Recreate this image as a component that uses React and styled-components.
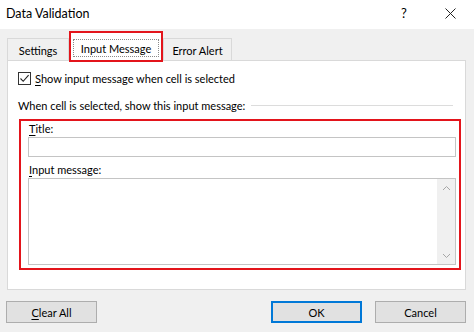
import React from 'react'
import styled, { createGlobalStyle } from 'styled-components'

const Global = createGlobalStyle`
  html, body {
    margin: 0;
    padding: 0;
    background: #f0f0f0;
  }
  body {
    font-family: Lato, "Open Sans", sans-serif;
    color: #000;
  }
`

const Dialog = styled.div`
  width: 474px;
  height: 332px;
  display: flex;
  flex-direction: column;
  background: #f0f0f0;
  overflow: hidden;
`

const TitleBar = styled.div`
  height: 29px;
  background: #fff;
  display: flex;
  align-items: center;
  padding-left: 6px;
  font-size: 12.5px;
`

const TitleText = styled.div`
  flex: 1;
  margin-top: -2px;
`

const Help = styled.div`
  width: 14px;
  font-size: 13px;
  margin-right: 30px;
  margin-top: -3px;
`

const Close = styled.div`
  width: 29px;
  display: flex;
  align-items: center;
  margin-top: -3px;
`

const Body = styled.div`
  flex: 1;
  padding: 0 8px 0 7px;
  display: flex;
  flex-direction: column;
`

const TabStrip = styled.div`
  height: 31px;
  display: flex;
  align-items: flex-end;
  font-size: 11px;
`

const Tab = styled.div`
  width: ${p => p.w}px;
  height: 22px;
  margin-right: 2px;
  border: 1px solid #d9d9d9;
  border-bottom: none;
  background: #f0f0f0;
  display: flex;
  align-items: center;
  justify-content: center;
  padding-top: 1px;
  box-sizing: border-box;
`

const ActiveTab = styled.div`
  position: relative;
  z-index: 2;
  width: 90px;
  height: 27px;
  margin-right: 2px;
  background: #fff;
  outline: 2px solid #e3141b;
  display: flex;
  align-items: center;
  justify-content: center;
  padding-top: 3px;
  box-sizing: border-box;
`

const Focus = styled.span`
  border: 1px dotted #8a8a8a;
  height: 18px;
  width: 86px;
  box-sizing: border-box;
  white-space: nowrap;
  display: flex;
  align-items: center;
  justify-content: center;
`

const Panel = styled.div`
  height: 230px;
  background: #fff;
  border: 1px solid #d9d9d9;
  box-sizing: border-box;
  padding: 11px 10px 0 9px;
  font-size: 11px;
  display: flex;
  flex-direction: column;
`

const CheckRow = styled.label`
  display: flex;
  align-items: center;
  gap: 4px;
  height: 13px;
  margin-left: 1px;
`

const Box = styled.span`
  width: 13px;
  height: 13px;
  border: 1px solid #333;
  box-sizing: border-box;
  display: flex;
  align-items: center;
  justify-content: center;
`

const GroupHead = styled.div`
  display: flex;
  align-items: center;
  gap: 6px;
  margin-top: 12px;
  margin-left: 1px;
  margin-right: 2px;
  height: 16px;
`

const Rule = styled.div`
  flex: 1;
  height: 1px;
  background: #dcdcdc;
`

const Highlight = styled.div`
  margin: 6px -6px 0 2px;
  height: 151px;
  border: 2px solid #e3141b;
  box-sizing: border-box;
  padding: 0 3px 0 7px;
  display: flex;
  flex-direction: column;
`

const FieldLabel = styled.div`
  height: 15px;
  line-height: 15px;
  margin-left: 1px;
  margin-top: ${p => p.top || 0}px;
`

const TextBox = styled.div`
  height: 20px;
  border: 1px solid #c4c4c4;
  box-sizing: border-box;
  margin-top: 1px;
`

const TextArea = styled.div`
  height: 87px;
  border: 1px solid #c4c4c4;
  box-sizing: border-box;
  margin-top: 1px;
  display: flex;
  justify-content: flex-end;
`

const Scroll = styled.div`
  width: 18px;
  background: #f0f0f0;
  display: flex;
  flex-direction: column;
  justify-content: space-between;
  align-items: center;
  padding: 6px 0 5px;
`

const Footer = styled.div`
  height: 42px;
  display: flex;
  align-items: flex-start;
  padding-top: 11px;
  box-sizing: border-box;
  margin-left: -1px;
  gap: 13px;
`

const Button = styled.div`
  width: 91px;
  height: 22px;
  box-sizing: border-box;
  background: #e1e1e1;
  border: ${p => (p.primary ? '2px solid #0078d7' : '1px solid #adadad')};
  display: flex;
  align-items: center;
  justify-content: center;
  font-size: 11px;
  margin-left: ${p => (p.push ? 'auto' : '0')};
`

const U = styled.span`
  text-decoration: underline;
  text-underline-offset: 2px;
`

const Chevron = ({ down }) => (
  <svg width="9" height="6" viewBox="0 0 9 6">
    <path
      d={down ? 'M1 1 L4.5 4.5 L8 1' : 'M1 5 L4.5 1.5 L8 5'}
      fill="none"
      stroke="#a6a6a6"
      strokeWidth="1"
    />
  </svg>
)

export default function App() {
  return (
    <>
      <Global />
      <Dialog>
        <TitleBar>
          <TitleText>Data Validation</TitleText>
          <Help>?</Help>
          <Close>
            <svg width="11" height="11" viewBox="0 0 11 11">
              <path d="M0.5 0.5 L10.5 10.5 M10.5 0.5 L0.5 10.5" stroke="#222" strokeWidth="1" />
            </svg>
          </Close>
        </TitleBar>
        <Body>
          <TabStrip>
            <Tab w={62}>Settings</Tab>
            <ActiveTab>
              <Focus>Input Message</Focus>
            </ActiveTab>
            <Tab w={69}>Error Alert</Tab>
          </TabStrip>
          <Panel>
            <CheckRow>
              <Box>
                <svg width="11" height="11" viewBox="0 0 11 11">
                  <path d="M1.5 5.5 L4.2 8.3 L9.6 2.2" fill="none" stroke="#222" strokeWidth="1.1" />
                </svg>
              </Box>
              <span>
                <U>S</U>how input message when cell is selected
              </span>
            </CheckRow>
            <GroupHead>
              <span>When cell is selected, show this input message:</span>
              <Rule />
            </GroupHead>
            <Highlight>
              <FieldLabel>
                <U>T</U>itle:
              </FieldLabel>
              <TextBox />
              <FieldLabel top={5}>
                <U>I</U>nput message:
              </FieldLabel>
              <TextArea>
                <Scroll>
                  <Chevron />
                  <Chevron down />
                </Scroll>
              </TextArea>
            </Highlight>
          </Panel>
          <Footer>
            <Button>
              <span>
                <U>C</U>lear All
              </span>
            </Button>
            <Button primary push>OK</Button>
            <Button>Cancel</Button>
          </Footer>
        </Body>
      </Dialog>
    </>
  )
}
